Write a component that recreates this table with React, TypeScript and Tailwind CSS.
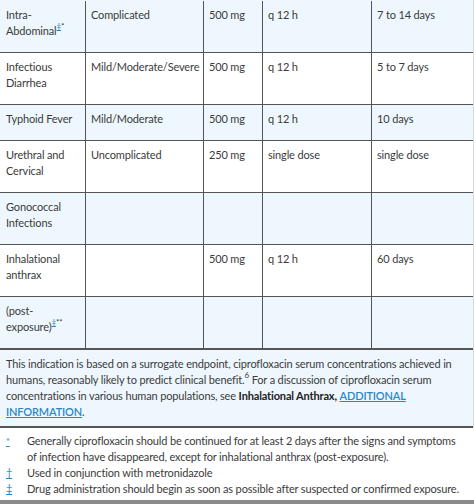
import React from "react";

type Row = {
  site: React.ReactNode;
  type: string;
  dose: string;
  freq: string;
  dur: string;
  shade: boolean;
};

const Link = ({ children, className = "" }: { children: React.ReactNode; className?: string }) => (
  <span className={`text-[#2a87c6] underline ${className}`}>{children}</span>
);

const Sup = ({ children }: { children: React.ReactNode }) => (
  <sup className="text-[8px] leading-none align-[2px]">{children}</sup>
);

const rows: Row[] = [
  {
    site: (
      <>
        Intra-
        <br />
        Abdominal
        <Sup>
          <Link>‡</Link>*
        </Sup>
      </>
    ),
    type: "Complicated",
    dose: "500 mg",
    freq: "q 12 h",
    dur: "7 to 14 days",
    shade: true,
  },
  {
    site: (
      <>
        Infectious
        <br />
        Diarrhea
      </>
    ),
    type: "Mild/Moderate/Severe",
    dose: "500 mg",
    freq: "q 12 h",
    dur: "5 to 7 days",
    shade: false,
  },
  { site: "Typhoid Fever", type: "Mild/Moderate", dose: "500 mg", freq: "q 12 h", dur: "10 days", shade: true },
  {
    site: (
      <>
        Urethral and
        <br />
        Cervical
      </>
    ),
    type: "Uncomplicated",
    dose: "250 mg",
    freq: "single dose",
    dur: "single dose",
    shade: false,
  },
  {
    site: (
      <>
        Gonococcal
        <br />
        Infections
      </>
    ),
    type: "",
    dose: "",
    freq: "",
    dur: "",
    shade: true,
  },
  {
    site: (
      <>
        Inhalational
        <br />
        anthrax
      </>
    ),
    type: "",
    dose: "500 mg",
    freq: "q 12 h",
    dur: "60 days",
    shade: false,
  },
  {
    site: (
      <>
        (post-
        <br />
        exposure)
        <Sup>
          <Link>‡</Link>**
        </Sup>
      </>
    ),
    type: "",
    dose: "",
    freq: "",
    dur: "",
    shade: true,
  },
];

const footnotes = [
  {
    sym: <Link className="text-[9px]">*</Link>,
    text: "Generally ciprofloxacin should be continued for at least 2 days after the signs and symptoms of infection have disappeared, except for inhalational anthrax (post-exposure).",
  },
  { sym: <Link className="no-underline">†</Link>, text: "Used in conjunction with metronidazole" },
  { sym: <Link className="no-underline">‡</Link>, text: "Drug administration should begin as soon as possible after suspected or confirmed exposure." },
];

export default function App() {
  const cell = "pt-[6px] pb-[13px] px-[5px] whitespace-nowrap";
  return (
    <div
      className="w-[474px] h-[504px] overflow-hidden bg-white text-[#3b3b3b] text-[11px] leading-[16px] tracking-[-0.15px]"
      style={{ fontFamily: "Lato, 'Noto Sans', sans-serif" }}
    >
      <div className="border-r border-[#d8d8d8] pt-[1px] bg-[#eef7fd]">
        {rows.map((r, i) => (
          <div
            key={i}
            className={`grid grid-cols-[85px_118px_59px_109px_1fr] ${
              i === rows.length - 1 ? "border-b-2" : "border-b"
            } border-[#555] ${r.shade ? "bg-[#eef7fd]" : "bg-white"}`}
          >
            <div className={`${cell} pl-[6px]`}>{r.site}</div>
            <div className={`${cell} border-l border-[#555]`}>{r.type}</div>
            <div className={`${cell} border-l border-[#555]`}>{r.dose}</div>
            <div className={`${cell} border-l border-[#555]`}>{r.freq}</div>
            <div className={`${cell} border-l border-[#555]`}>{r.dur}</div>
          </div>
        ))}
        <div className="bg-[#eef7fd] border-b-2 border-[#555] pl-[6px] pr-[2px] pt-[6px] pb-[6px]">
          This indication is based on a surrogate endpoint, ciprofloxacin serum concentrations achieved in
          humans, reasonably likely to predict clinical benefit.<Sup>6</Sup> For a discussion of ciprofloxacin
          serum concentrations in various human populations, see{" "}
          <b className="text-[#222]">Inhalational Anthrax,</b>{" "}
          <Link className="font-semibold">ADDITIONAL INFORMATION</Link>.
        </div>
      </div>
      <ul className="pt-[5px] pb-[3px] pr-[12px]">
        {footnotes.map((f, i) => (
          <li key={i} className="flex">
            <span className="w-[27px] shrink-0 pl-[6px]">{f.sym}</span>
            <span>{f.text}</span>
          </li>
        ))}
      </ul>
      <div className="h-[6px] bg-[#8a8a8a]" />
    </div>
  );
}
